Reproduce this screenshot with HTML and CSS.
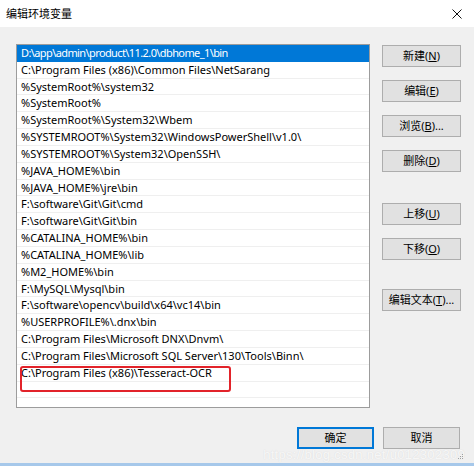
FILE: index.html
```html
<!DOCTYPE html>
<html lang="zh-CN">
<head>
<meta charset="utf-8">
<title>编辑环境变量</title>
<link rel="stylesheet" href="styles.css">
</head>
<body>
<div class="window">
  <div class="titlebar">
    <span class="title">编辑环境变量</span>
    <svg class="close" width="10" height="10" viewBox="0 0 10 10"><path d="M0.5 0.5 L9.5 9.5 M9.5 0.5 L0.5 9.5" stroke="#111" stroke-width="1" fill="none"/></svg>
  </div>
  <div class="body">
    <div class="main">
      <div class="listbox">
        <div class="row selected">D:\app\admin\product\11.2.0\dbhome_1\bin</div>
        <div class="row">C:\Program Files (x86)\Common Files\NetSarang</div>
        <div class="row">%SystemRoot%\system32</div>
        <div class="row">%SystemRoot%</div>
        <div class="row">%SystemRoot%\System32\Wbem</div>
        <div class="row">%SYSTEMROOT%\System32\WindowsPowerShell\v1.0\</div>
        <div class="row">%SYSTEMROOT%\System32\OpenSSH\</div>
        <div class="row">%JAVA_HOME%\bin</div>
        <div class="row">%JAVA_HOME%\jre\bin</div>
        <div class="row">F:\software\Git\Git\cmd</div>
        <div class="row">F:\software\Git\Git\bin</div>
        <div class="row">%CATALINA_HOME%\bin</div>
        <div class="row">%CATALINA_HOME%\lib</div>
        <div class="row">%M2_HOME%\bin</div>
        <div class="row">F:\MySQL\Mysql\bin</div>
        <div class="row">F:\software\opencv\build\x64\vc14\bin</div>
        <div class="row">%USERPROFILE%\.dnx\bin</div>
        <div class="row">C:\Program Files\Microsoft DNX\Dnvm\</div>
        <div class="row">C:\Program Files\Microsoft SQL Server\130\Tools\Binn\</div>
        <div class="row">C:\Program Files (x86)\Tesseract-OCR</div>
        <div class="row"></div>
        <div class="row"></div>
        <div class="highlight"></div>
      </div>
      <div class="side">
        <div class="group">
          <button class="btn">新建(<u>N</u>)</button>
          <button class="btn">编辑(<u>E</u>)</button>
          <button class="btn">浏览(<u>B</u>)...</button>
          <button class="btn">删除(<u>D</u>)</button>
        </div>
        <div class="group">
          <button class="btn">上移(<u>U</u>)</button>
          <button class="btn">下移(<u>O</u>)</button>
        </div>
        <div class="group">
          <button class="btn">编辑文本(<u>T</u>)...</button>
        </div>
      </div>
    </div>
    <div class="footer">
      <button class="btn default">确定</button>
      <button class="btn">取消</button>
    </div>
    <div class="watermark">https://blog.csdn.net/u012302309</div>
    <svg class="grip" width="6" height="6" viewBox="0 0 6 6"><g fill="#a0a0a0"><rect x="4" y="0" width="1" height="1"/><rect x="2" y="2" width="1" height="1"/><rect x="4" y="2" width="1" height="1"/><rect x="0" y="4" width="1" height="1"/><rect x="2" y="4" width="1" height="1"/><rect x="4" y="4" width="1" height="1"/></g></svg>
  </div>
  <div class="bottomedge"></div>
</div>
</body>
</html>
```

FILE: styles.css
```css
* { box-sizing: border-box; }
html, body { margin: 0; padding: 0; }
body {
  width: 474px;
  height: 466px;
  overflow: hidden;
  background: #f0f0f0;
  font-family: "Noto Sans", "Noto Sans CJK SC", sans-serif;
  font-size: 11px;
  color: #000;
}
.window {
  width: 474px;
  height: 466px;
  display: flex;
  flex-direction: column;
}
.titlebar {
  height: 27px;
  background: #fff;
  display: flex;
  align-items: center;
  justify-content: space-between;
  padding: 0 12px 0 6px;
}
.title {
  font-size: 11px;
  line-height: 1;
  margin-top: -1px;
}
.close { margin-top: 0; }
.body {
  position: relative;
  flex: 1;
  padding: 17px 0 0 16px;
}
.main {
  display: flex;
  align-items: flex-start;
}
.listbox {
  position: relative;
  width: 354px;
  height: 364px;
  background: #fff;
  border: 1px solid #9c9c9c;
  overflow: hidden;
}
.row {
  height: 16.84px;
  line-height: 16px;
  padding-left: 4px;
  border-bottom: 1px solid #efefef;
  white-space: nowrap;
  font-size: 11px;
}
.row.selected {
  background: #0078d7;
  color: #fff;
  border-bottom-color: #0078d7;
  letter-spacing: -0.6px;
}
.highlight {
  position: absolute;
  left: 3px;
  top: 321px;
  width: 211px;
  height: 26px;
  border: 2px solid #e2232a;
  border-radius: 3px;
}
.side {
  margin-left: 12px;
  display: flex;
  flex-direction: column;
  gap: 31px;
  padding-top: 1px;
}
.side .group {
  display: flex;
  flex-direction: column;
  gap: 13px;
}
.side .group:nth-child(3) { margin-top: -2px; }
.btn {
  width: 79px;
  height: 22px;
  background: #e1e1e1;
  border: 1px solid #adadad;
  font-family: "Noto Sans", "Noto Sans CJK SC", sans-serif;
  font-size: 11px;
  color: #000;
  padding: 0;
  line-height: 20px;
  text-align: center;
}
.btn u { text-decoration: underline; }
.footer {
  display: flex;
  justify-content: flex-end;
  gap: 9px;
  margin-top: 19px;
  padding-right: 14px;
}
.footer .btn { width: 77px; }
.btn.default { border: 1px solid #0078d7; box-shadow: inset 0 0 0 1px #0078d7; }
.watermark {
  position: absolute;
  right: 9px;
  bottom: 2px;
  font-family: "Liberation Sans", sans-serif;
  font-size: 13px;
  line-height: 12px;
  color: rgba(255, 255, 255, 0.8);
  text-shadow: 0 0 1px rgba(150, 150, 150, 0.3);
  letter-spacing: 0.3px;
}
.grip {
  position: absolute;
  right: 10px;
  bottom: 3px;
}
.bottomedge {
  height: 3px;
  background: #a6c8ea;
}
```
